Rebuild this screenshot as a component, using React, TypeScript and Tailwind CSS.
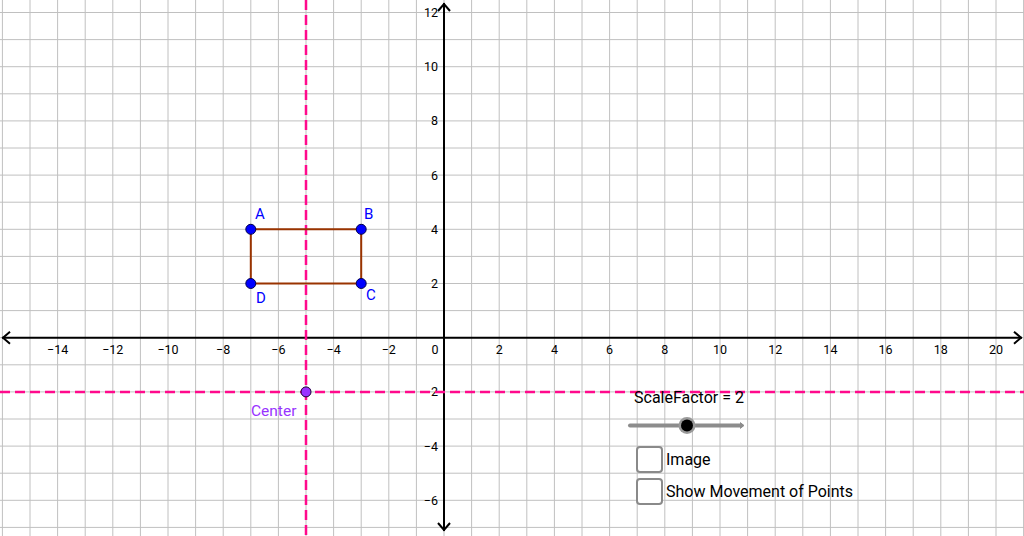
import React from "react";

const OX = 444;
const OY = 337.7;
const SX = 27.6;
const SY = 27.1;

const px = (x: number) => OX + x * SX;
const py = (y: number) => OY - y * SY;

const xs = Array.from({ length: 38 }, (_, i) => i - 16);
const ys = Array.from({ length: 20 }, (_, i) => i - 7);

const xLabels = [-14, -12, -10, -8, -6, -4, -2, 2, 4, 6, 8, 10, 12, 14, 16, 18, 20];
const yLabels = [12, 10, 8, 6, 4, 2, -2, -4, -6];

const fmt = (n: number) => (n < 0 ? `\u2212${-n}` : `${n}`);

function Checkbox({ label }: { label: string }) {
  return (
    <div className="flex items-center gap-[3px] h-[29px]">
      <div className="w-[27px] h-[27px] rounded-[4px] border-2 border-[#8a8a8a] bg-white" />
      <span className="text-[16px] text-black leading-none">{label}</span>
    </div>
  );
}

export default function App() {
  return (
    <div
      className="relative w-[1024px] h-[536px] bg-white overflow-hidden"
      style={{ fontFamily: "Roboto, 'Liberation Sans', sans-serif" }}
    >
      <svg width={1024} height={536} className="absolute inset-0" fontFamily="Roboto, 'Liberation Sans', sans-serif">
        {/* grid */}
        {xs.map((x) => (
          <line key={`gx${x}`} x1={px(x)} y1={0} x2={px(x)} y2={536} stroke="#c0c0c0" strokeWidth={1} />
        ))}
        {ys.map((y) => (
          <line key={`gy${y}`} x1={0} y1={py(y)} x2={1024} y2={py(y)} stroke="#c0c0c0" strokeWidth={1} />
        ))}

        {/* axes */}
        <line x1={2} y1={OY} x2={1022} y2={OY} stroke="#000" strokeWidth={2} />
        <line x1={OX} y1={3} x2={OX} y2={531} stroke="#000" strokeWidth={2} />
        <polyline points={`10,${OY - 6} 3,${OY} 10,${OY + 6}`} fill="none" stroke="#000" strokeWidth={2} />
        <polyline points={`1014,${OY - 6} 1021,${OY} 1014,${OY + 6}`} fill="none" stroke="#000" strokeWidth={2} />
        <polyline points={`${OX - 6},11 ${OX},4 ${OX + 6},11`} fill="none" stroke="#000" strokeWidth={2} />
        <polyline points={`${OX - 6},523 ${OX},530 ${OX + 6},523`} fill="none" stroke="#000" strokeWidth={2} />

        {/* axis labels */}
        {xLabels.map((x) => (
          <text key={`lx${x}`} x={px(x)} y={354} fontSize={12.5} textAnchor="middle" fill="#000">
            {fmt(x)}
          </text>
        ))}
        <text x={435} y={354} fontSize={12.5} textAnchor="middle" fill="#000">
          0
        </text>
        {yLabels.map((y) => (
          <text key={`ly${y}`} x={438} y={py(y) + 4.5} fontSize={12.5} textAnchor="end" fill="#000">
            {fmt(y)}
          </text>
        ))}

        {/* dashed center lines */}
        <line x1={px(-5)} y1={0} x2={px(-5)} y2={536} stroke="#ff0a8c" strokeWidth={2.5} strokeDasharray="10 5" />
        <line x1={0} y1={py(-2)} x2={1024} y2={py(-2)} stroke="#ff0a8c" strokeWidth={2.5} strokeDasharray="10 5" />

        {/* rectangle */}
        <polygon
          points={`${px(-7)},${py(4)} ${px(-3)},${py(4)} ${px(-3)},${py(2)} ${px(-7)},${py(2)}`}
          fill="none"
          stroke="#993300"
          strokeWidth={2}
        />
        {[
          [-7, 4],
          [-3, 4],
          [-3, 2],
          [-7, 2],
        ].map(([x, y]) => (
          <circle key={`p${x}${y}`} cx={px(x)} cy={py(y)} r={5} fill="#0000ff" stroke="#00004d" strokeWidth={1} />
        ))}
        <text x={255} y={219} fontSize={15} fill="#0000ff">A</text>
        <text x={364} y={219} fontSize={15} fill="#0000ff">B</text>
        <text x={366} y={300} fontSize={15} fill="#0000ff">C</text>
        <text x={256} y={303} fontSize={15} fill="#0000ff">D</text>

        {/* center */}
        <circle cx={px(-5)} cy={py(-2)} r={5} fill="#9933ff" stroke="#1a0033" strokeWidth={1} />
        <text x={251} y={416} fontSize={15.5} fill="#9933ff">Center</text>

        {/* slider */}
        <line x1={630} y1={425.5} x2={741} y2={425.5} stroke="#8c8c8c" strokeWidth={4} strokeLinecap="round" />
        <polyline points="740,422.5 744,425.5 740,428.5" fill="#8c8c8c" stroke="#8c8c8c" strokeWidth={1} />
        <circle cx={687} cy={425.5} r={8.5} fill="#9a9a9a" />
        <circle cx={687} cy={425.5} r={6} fill="#000" />
      </svg>

      <div className="absolute left-[634px] top-[388px] text-[16px] leading-5 text-black">ScaleFactor = 2</div>

      <div className="absolute left-[636px] top-[445px] flex flex-col gap-[3px]">
        <Checkbox label="Image" />
        <Checkbox label="Show Movement of Points" />
      </div>
    </div>
  );
}
